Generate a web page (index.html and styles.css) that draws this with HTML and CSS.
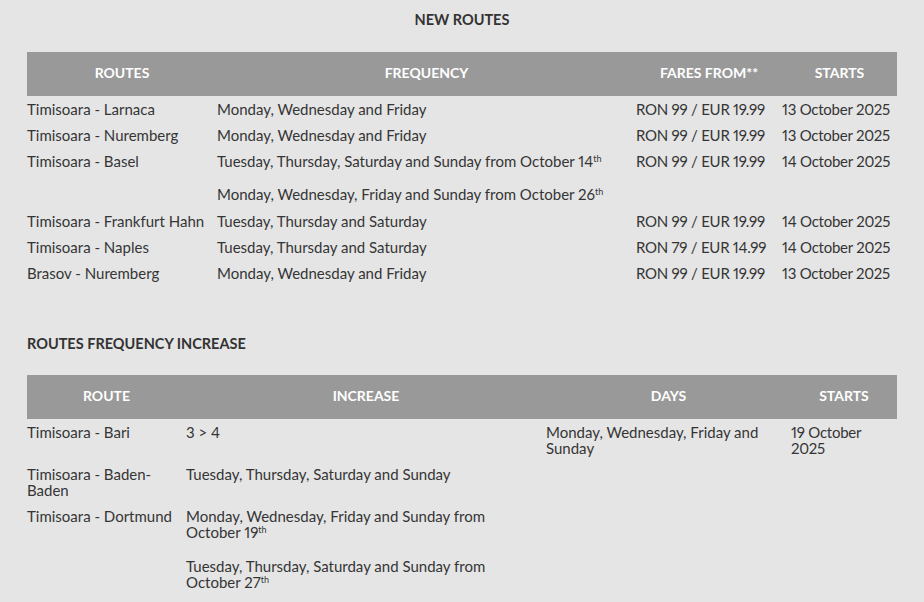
FILE: index.html
```html
<!DOCTYPE html>
<html>
<head>
<meta charset="utf-8">
<link rel="stylesheet" href="styles.css">
</head>
<body>
<div class="page">
  <h2 class="title center">NEW ROUTES</h2>
  <table class="tbl t1">
    <colgroup><col class="c1"><col class="c2"><col class="c3"><col class="c4"></colgroup>
    <thead>
      <tr><th>ROUTES</th><th>FREQUENCY</th><th>FARES FROM**</th><th>STARTS</th></tr>
    </thead>
    <tbody>
      <tr><td>Timisoara - Larnaca</td><td>Monday, Wednesday and Friday</td><td class="num">RON 99 / EUR 19.99</td><td class="num">13 October 2025</td></tr>
      <tr><td>Timisoara - Nuremberg</td><td>Monday, Wednesday and Friday</td><td class="num">RON 99 / EUR 19.99</td><td class="num">13 October 2025</td></tr>
      <tr><td>Timisoara - Basel</td><td><p>Tuesday, Thursday, Saturday and Sunday from October 14<sup>th</sup></p><p>Monday, Wednesday, Friday and Sunday from October 26<sup>th</sup></p></td><td class="num">RON 99 / EUR 19.99</td><td class="num">14 October 2025</td></tr>
      <tr><td>Timisoara - Frankfurt Hahn</td><td>Tuesday, Thursday and Saturday</td><td class="num">RON 99 / EUR 19.99</td><td class="num">14 October 2025</td></tr>
      <tr><td>Timisoara - Naples</td><td>Tuesday, Thursday and Saturday</td><td class="num">RON 79 / EUR 14.99</td><td class="num">14 October 2025</td></tr>
      <tr><td>Brasov - Nuremberg</td><td>Monday, Wednesday and Friday</td><td class="num">RON 99 / EUR 19.99</td><td class="num">13 October 2025</td></tr>
    </tbody>
  </table>

  <h2 class="title">ROUTES FREQUENCY INCREASE</h2>
  <table class="tbl t2">
    <colgroup><col class="d1"><col class="d2"><col class="d3"><col class="d4"></colgroup>
    <thead>
      <tr><th>ROUTE</th><th>INCREASE</th><th>DAYS</th><th>STARTS</th></tr>
    </thead>
    <tbody>
      <tr><td>Timisoara - Bari</td><td>3 &gt; 4</td><td>Monday, Wednesday, Friday and Sunday</td><td class="num">19 October 2025</td></tr>
      <tr><td>Timisoara - Baden-Baden</td><td>Tuesday, Thursday, Saturday and Sunday</td><td></td><td></td></tr>
      <tr><td>Timisoara - Dortmund</td><td><p>Monday, Wednesday, Friday and Sunday from October 19<sup>th</sup></p><p>Tuesday, Thursday, Saturday and Sunday from October 27<sup>th</sup></p></td><td></td><td></td></tr>
    </tbody>
  </table>
</div>
</body>
</html>
```

FILE: styles.css
```css
html, body {
  margin: 0;
  padding: 0;
  background: #e5e5e5;
}
body {
  font-family: Lato, "Liberation Sans", sans-serif;
  color: #353535;
  font-size: 15px;
  font-variant-numeric: proportional-nums;
}
.page {
  padding: 10px 27px 0 27px;
}
.title {
  font-size: 14.5px;
  font-weight: bold;
  color: #333;
  margin: 0;
  line-height: 20px;
}
.title.center {
  text-align: center;
  margin-bottom: 22px;
}
.tbl {
  width: 100%;
  border-collapse: collapse;
  table-layout: fixed;
}
.tbl th {
  background: #999999;
  color: #fff;
  font-weight: bold;
  font-size: 14px;
  height: 40px;
  padding: 0 0 4px 0;
  text-align: center;
  vertical-align: middle;
}
.tbl td {
  padding: 5px 10px 5px 0;
  line-height: 16px;
  vertical-align: top;
  text-align: left;
}
.t1 td {
  padding-right: 0;
  white-space: nowrap;
}
.tbl td.num {
  letter-spacing: -0.25px;
}
.tbl td p {
  margin: 0 0 17px 0;
}
.t1 td p:last-child {
  margin-bottom: 1px;
}
.t2 td p {
  margin-bottom: 18px;
}
.t2 td p:last-child {
  margin-bottom: 0;
}
.tbl sup {
  font-size: 9px;
  line-height: 0;
  vertical-align: 5px;
  letter-spacing: 0;
}
.t1 { margin-bottom: 48px; }
.t2 { margin-top: 21px; }
.c1 { width: 190px; }
.c2 { width: 419px; }
.c3 { width: 146px; }
.c4 { width: 115px; }
.d1 { width: 159px; }
.d2 { width: 360px; }
.d3 { width: 245px; }
.d4 { width: 106px; }
```
